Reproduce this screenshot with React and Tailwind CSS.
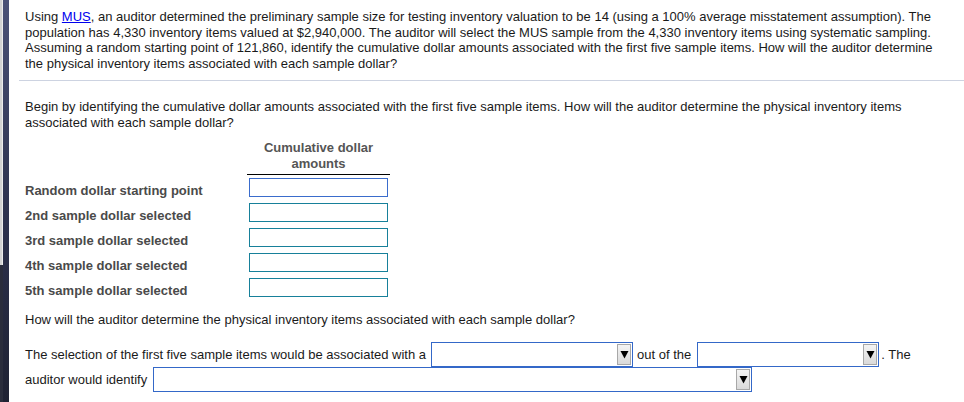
import React from "react";

function Arrow() {
  return (
    <div className="w-[14px] h-[21px] mr-[1px] flex items-center justify-center border border-[#a8a8a8] bg-gradient-to-b from-[#f4f4f4] to-[#dadada]">
      <svg width="9" height="9" viewBox="0 0 9 9">
        <polygon points="0.5,1 8.5,1 4.5,8.5" fill="#000" />
      </svg>
    </div>
  );
}

function Select({ w }) {
  return (
    <div className={`${w} h-[25px] border border-[#3468c8] bg-white flex items-center justify-end shrink-0`}>
      <Arrow />
    </div>
  );
}

const rows = [
  "Random dollar starting point",
  "2nd sample dollar selected",
  "3rd sample dollar selected",
  "4th sample dollar selected",
  "5th sample dollar selected",
];

export default function App() {
  return (
    <div className="w-[964px] h-[402px] flex bg-white overflow-hidden text-[#1a1a1a]" style={{ fontFamily: '"Liberation Sans", Arial, sans-serif' }}>
      <div className="flex shrink-0">
        <div className="w-[2px] flex flex-col">
          <div className="h-[265px] bg-[#d3d3d3]" />
          <div className="flex-1 bg-[#2a2d3c]" />
        </div>
        <div className="w-[1px] flex flex-col">
          <div className="h-[265px] bg-[#ececec]" />
          <div className="flex-1 bg-[#2a2d3c]" />
        </div>
        <div className="w-[6px] bg-gradient-to-b from-[#4b5277] via-[#2e3350] to-[#1f2233]" />
      </div>
      <div className="flex-1 pl-[10px] text-[13px] leading-[15.7px]">
        <p className="pl-[6px] pt-[9px] pr-[20px]">
          Using <span className="text-[#0000ee] underline">MUS</span>, an auditor determined the preliminary sample size for testing inventory valuation to be 14 (using a 100% average misstatement assumption). The population has 4,330 inventory items valued at $2,940,000. The auditor will select the MUS sample from the 4,330 inventory items using systematic sampling. Assuming a random starting point of 121,860, identify the cumulative dollar amounts associated with the first five sample items. How will the auditor determine the physical inventory items associated with each sample dollar?
        </p>
        <div className="mt-[8px] border-t border-[#cdd3e1]" />
        <p className="pl-[6px] mt-[18px] pr-[40px]">
          Begin by identifying the cumulative dollar amounts associated with the first five sample items. How will the auditor determine the physical inventory items associated with each sample dollar?
        </p>
        <div className="pl-[6px] mt-[10px] grid grid-cols-[222px_143px]">
          <div />
          <div className="text-center font-bold text-[#555] leading-[16px] pb-[2px] border-b border-black mb-[3px]">
            Cumulative dollar<br />amounts
          </div>
          {rows.map((r, i) => (
            <React.Fragment key={r}>
              <div className="h-[25px] flex items-start pt-[5px] font-bold text-[#4a4a4a]">{r}</div>
              <div className="h-[25px] px-[2px]">
                <div className={`h-[19px] border ${i === 0 ? "border-[#3a6ccc]" : "border-[#17809a]"} bg-white`} />
              </div>
            </React.Fragment>
          ))}
        </div>
        <p className="pl-[6px] mt-[9px]">How will the auditor determine the physical inventory items associated with each sample dollar?</p>
        <div className="pl-[6px] mt-[14px] h-[25px] flex items-center">
          <span>The selection of the first five sample items would be associated with a</span>
          <span className="w-[5px]" />
          <Select w="w-[202px]" />
          <span className="ml-[4px] mr-[6px]">out of the</span>
          <Select w="w-[182px]" />
          <span className="ml-[2px]">. The</span>
        </div>
        <div className="pl-[6px] h-[25px] flex items-center">
          <span className="mr-[6px]">auditor would identify</span>
          <Select w="w-[599px]" />
        </div>
      </div>
    </div>
  );
}
